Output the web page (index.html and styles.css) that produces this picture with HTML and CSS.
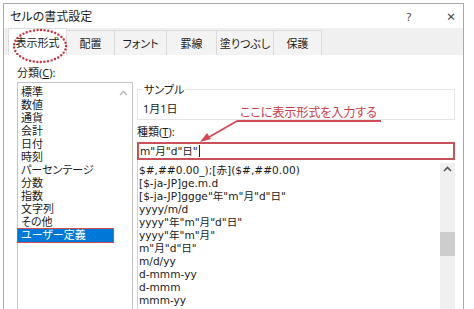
FILE: index.html
```html
<!DOCTYPE html>
<html lang="ja">
<head>
  <meta charset="UTF-8" />
  <title>セルの書式設定</title>
  <meta name="viewport" content="width=device-width, initial-scale=1.0" />
  <link rel="stylesheet" href="styles.css">
</head>
<body>
  <div class="window">
    <div class="titlebar">
      <span class="title">セルの書式設定</span>
      <span class="help">?</span>
      <span class="close">×</span>
    </div>

    <div class="tabs">
      <div class="tab active">表示形式</div>
      <div class="tab">配置</div>
      <div class="tab">フォント</div>
      <div class="tab">罫線</div>
      <div class="tab">塗りつぶし</div>
      <div class="tab">保護</div>
    </div>

    <div class="panel">
      <div class="category">
        <div class="label">分類(<u>C</u>):</div>
        <div class="listbox">
          <ul class="items">
            <li>標準</li>
            <li>数値</li>
            <li>通貨</li>
            <li>会計</li>
            <li>日付</li>
            <li>時刻</li>
            <li>パーセンテージ</li>
            <li>分数</li>
            <li>指数</li>
            <li>文字列</li>
            <li>その他</li>
            <li class="selected">ユーザー定義</li>
          </ul>
          <div class="vscroll plain">
            <svg class="chevron" width="9" height="6" viewBox="0 0 9 6"><polyline points="1,5 4.5,1.5 8,5" /></svg>
          </div>
        </div>
      </div>

      <div class="detail">
        <fieldset class="sample">
          <legend>サンプル</legend>
          <div class="sample-value">1月1日</div>
        </fieldset>

        <div class="label type-label">種類(<u>T</u>):</div>
        <div class="type-input">m"月"d"日"<span class="caret"></span></div>

        <div class="format-list">
          <ul class="items">
            <li>$#,##0.00_);[赤]($#,##0.00)</li>
            <li>[$-ja-JP]ge.m.d</li>
            <li>[$-ja-JP]ggge"年"m"月"d"日"</li>
            <li>yyyy/m/d</li>
            <li>yyyy"年"m"月"d"日"</li>
            <li>yyyy"年"m"月"</li>
            <li>m"月"d"日"</li>
            <li>m/d/yy</li>
            <li>d-mmm-yy</li>
            <li>d-mmm</li>
            <li>mmm-yy</li>
          </ul>
          <div class="vscroll">
            <div class="arrow-btn">
              <svg class="chevron dark" width="9" height="6" viewBox="0 0 9 6"><polyline points="1,5 4.5,1.5 8,5" /></svg>
            </div>
            <div class="thumb"></div>
          </div>
        </div>
      </div>
    </div>
  </div>

  <!-- 注釈 (赤い丸と矢印) -->
  <svg class="marks" width="474" height="309" viewBox="0 0 474 309">
    <ellipse cx="40" cy="46" rx="26" ry="16" class="dots" />
    <line x1="381" y1="121" x2="237" y2="121" class="pen" />
    <line x1="237" y1="121" x2="204" y2="140" class="pen" />
    <polygon points="200,142 207,133 211,139" class="head" />
  </svg>
  <div class="note">ここに表示形式を入力する</div>
</body>
</html>
```

FILE: styles.css
```css
* { box-sizing: border-box; margin: 0; padding: 0; }

body {
  font-family: "Noto Sans", "Noto Sans CJK JP", sans-serif;
  font-size: 11px;
  font-feature-settings: "palt";
  color: #1b1b1b;
  background: #fff;
  width: 474px;
  height: 309px;
  overflow: hidden;
  position: relative;
}

ul { list-style: none; }

.window {
  margin: 3px 0 0 3px;
  width: 461px;
  height: 306px;
  border: 1px solid #a9a9a9;
  border-bottom: none;
  display: flex;
  flex-direction: column;
}

.titlebar {
  height: 24px;
  display: flex;
  align-items: center;
  padding-left: 6px;
  font-size: 12px;
  background: #fff;
}

.title { flex: 1; }

.help, .close {
  width: 20px;
  text-align: center;
  color: #444;
}

.help { font-size: 11px; }

.close {
  margin-left: 22px;
  margin-right: 2px;
  font-size: 15px;
}

.tabs {
  height: 27px;
  display: flex;
  align-items: flex-end;
  padding-left: 4px;
  background: #f0f0f0;
}

.tab {
  height: 25px;
  display: flex;
  align-items: center;
  justify-content: center;
  background: #f3f3f3;
  border: 1px solid #dcdcdc;
  border-bottom: none;
  border-left: none;
  font-size: 11px;
}

.tab:nth-child(1) { width: 59px; }
.tab:nth-child(2) { width: 48px; }
.tab:nth-child(3) { width: 52px; }
.tab:nth-child(4) { width: 50px; }
.tab:nth-child(5) { width: 57px; }
.tab:nth-child(6) { width: 48px; }

.tab.active {
  height: 27px;
  background: #fff;
  border-left: 1px solid #dcdcdc;
}

.panel {
  flex: 1;
  display: flex;
  padding: 11px 8px 0 13px;
  background: #fff;
  min-height: 0;
}

.label {
  height: 13px;
  line-height: 13px;
}

.label u { text-decoration-thickness: 1px; text-underline-offset: 1px; }

.category {
  width: 116px;
  display: flex;
  flex-direction: column;
}

.listbox {
  flex: 1;
  margin-top: 3px;
  display: flex;
  border: 1px solid #c4c4c4;
  border-bottom: none;
}

.items {
  flex: 1;
  padding-top: 3px;
  font-family: "DejaVu Sans", "Noto Sans CJK JP", sans-serif;
}

.items li {
  height: 13px;
  line-height: 13px;
  white-space: nowrap;
}

.listbox .items li {
  padding-left: 3px;
  margin-right: 2px;
}

.listbox .items li.selected {
  background: #0078d7;
  color: #fff;
  box-shadow: 0 0 0 1px #d24a4f;
}

.vscroll {
  width: 15px;
  display: flex;
  flex-direction: column;
  align-items: center;
  background: #f0f0f0;
}

.vscroll.plain {
  width: 17px;
  background: #fff;
  padding-top: 7px;
}

.chevron polyline {
  fill: none;
  stroke: #b4b4b4;
  stroke-width: 1.3;
}

.chevron.dark polyline {
  stroke: #555;
  stroke-width: 1.6;
}

.arrow-btn {
  width: 15px;
  height: 12px;
  display: flex;
  align-items: center;
  justify-content: center;
}

.thumb {
  width: 15px;
  height: 24px;
  margin-top: 57px;
  background: #cdcdcd;
}

.detail {
  flex: 1;
  margin-left: 4px;
  display: flex;
  flex-direction: column;
}

.sample {
  margin-top: 17px;
  border: 1px solid #e4e4e4;
  padding: 0 5px 4px;
}

.sample legend {
  padding: 0 1px;
  height: 13px;
  line-height: 13px;
}

.sample-value {
  margin-top: 6px;
  height: 13px;
  line-height: 13px;
}

.type-label { margin-top: 5px; }

.type-input {
  margin-top: 4px;
  height: 18px;
  border: 2px solid #c9515a;
  padding-left: 1px;
  line-height: 14px;
  display: flex;
  align-items: center;
  font-family: "DejaVu Sans", "Noto Sans CJK JP", sans-serif;
  font-size: 10.6px;
}

.caret {
  display: inline-block;
  width: 1px;
  height: 12px;
  margin-left: 1px;
  background: #222;
}

.format-list {
  flex: 1;
  display: flex;
  border-left: 1px solid #d2d2d2;
  min-height: 0;
}

.format-list .items {
  padding: 4px 0 0 1px;
  overflow: hidden;
  font-size: 10.6px;
}

.format-list .vscroll {
  margin-top: 3px;
}

.marks {
  position: absolute;
  left: 0;
  top: 0;
  pointer-events: none;
}

.dots {
  fill: none;
  stroke: #c8303c;
  stroke-width: 2.4;
  stroke-linecap: round;
  stroke-dasharray: 0 3.6;
}

.pen {
  stroke: #d24a55;
  stroke-width: 1.8;
}

.head { fill: #d24a55; }

.note {
  position: absolute;
  left: 240px;
  top: 104px;
  font-family: "Noto Sans CJK JP", sans-serif;
  font-size: 12.2px;
  line-height: 16px;
  letter-spacing: -0.2px;
  color: #cc3d48;
}
```
